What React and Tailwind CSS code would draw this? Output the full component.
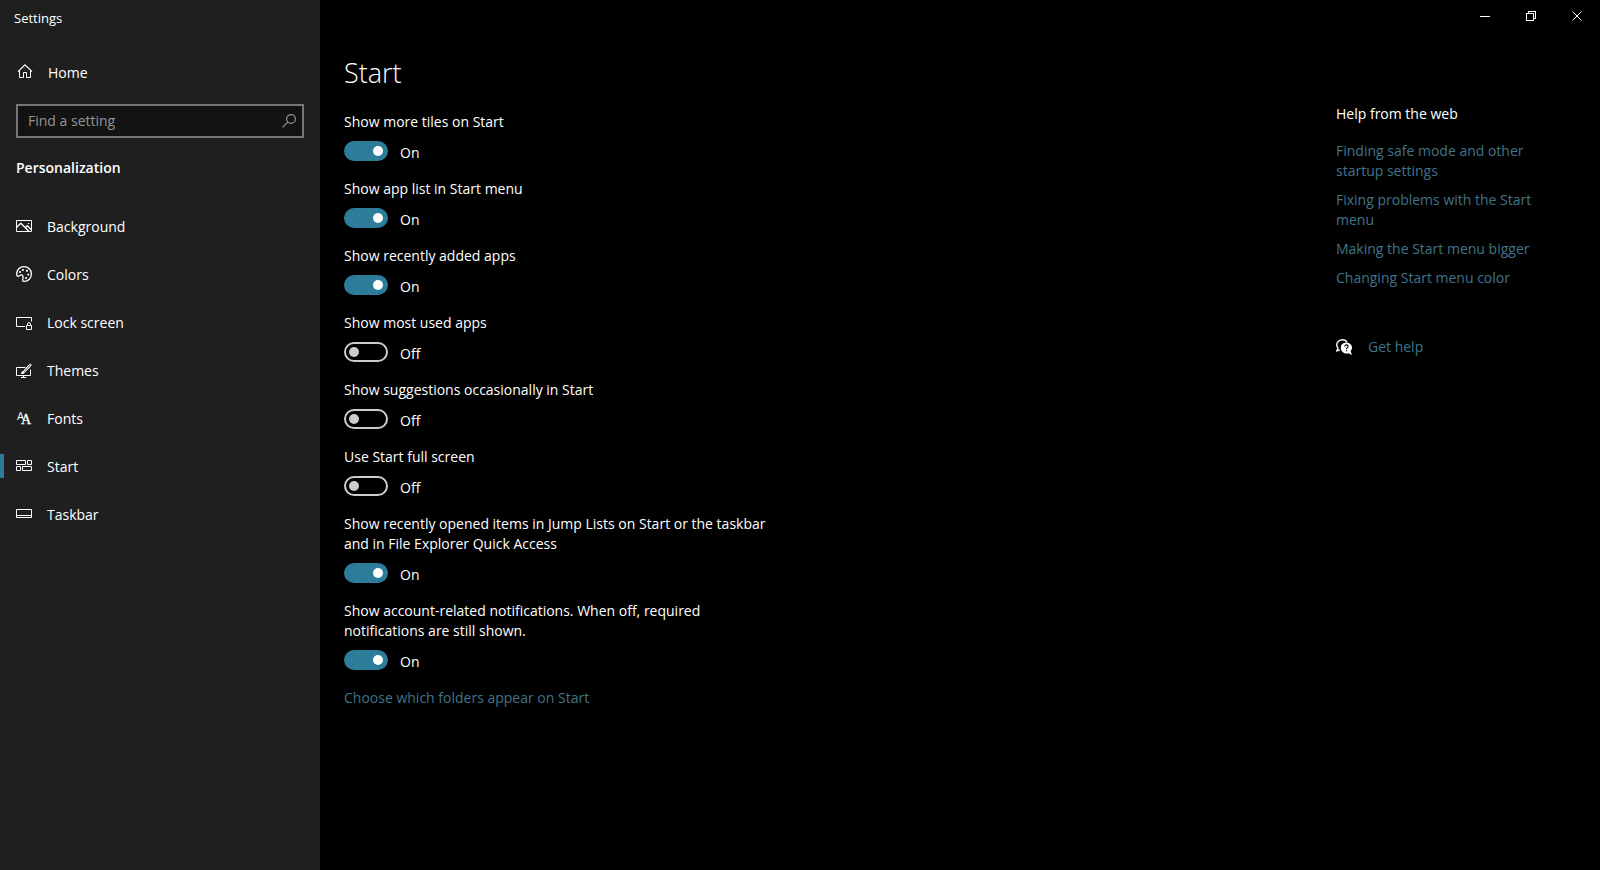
import React, { useState } from 'react';

const navItems = [
  { label: 'Background', icon: <BackgroundIcon /> },
  { label: 'Colors', icon: <ColorsIcon /> },
  { label: 'Lock screen', icon: <LockScreenIcon /> },
  { label: 'Themes', icon: <ThemesIcon /> },
  { label: 'Fonts', icon: <FontsIcon /> },
  { label: 'Start', icon: <StartIcon />, active: true },
  { label: 'Taskbar', icon: <TaskbarIcon /> },
];

const settings = [
  { id: 'more-tiles', label: 'Show more tiles on Start', on: true },
  { id: 'app-list', label: 'Show app list in Start menu', on: true },
  { id: 'recently-added', label: 'Show recently added apps', on: true },
  { id: 'most-used', label: 'Show most used apps', on: false },
  { id: 'suggestions', label: 'Show suggestions occasionally in Start', on: false },
  { id: 'full-screen', label: 'Use Start full screen', on: false },
  {
    id: 'jump-lists',
    label: 'Show recently opened items in Jump Lists on Start or the taskbar and in File Explorer Quick Access',
    on: true,
  },
  {
    id: 'account',
    label: 'Show account-related notifications. When off, required notifications are still shown.',
    on: true,
  },
];

const helpLinks = [
  'Finding safe mode and other startup settings',
  'Fixing problems with the Start menu',
  'Making the Start menu bigger',
  'Changing Start menu color',
];

export default function App() {
  return (
    <div className="flex min-h-screen bg-black font-['Open_Sans','Noto_Sans',sans-serif] text-sm leading-5 text-white">
      {/* Sidebar */}
      <aside className="flex w-80 shrink-0 flex-col bg-[#1f1f1f]">
        <div className="flex h-9 items-center px-3.5 text-[13px]">Settings</div>

        <a href="#" className="mt-3 flex h-12 items-center gap-[15px] pl-[17px]">
          <HomeIcon />
          <span className="pt-0.5">Home</span>
        </a>

        <div className="mx-4 mt-2 flex h-[34px] items-center border-2 border-[#767676] bg-[#131313] pl-[10px] pr-1.5">
          <input
            type="text"
            aria-label="Find a setting"
            placeholder="Find a setting"
            className="min-w-0 flex-1 bg-transparent outline-none placeholder:text-[#949494]"
          />
          <button type="button" aria-label="Search">
            <SearchIcon />
          </button>
        </div>

        <h2 className="mt-5 px-4 font-semibold">Personalization</h2>

        <nav className="mt-6">
          {navItems.map((item) => (
            <NavItem key={item.label} {...item} />
          ))}
        </nav>
      </aside>

      {/* Main content */}
      <div className="flex min-w-0 flex-1 flex-col">
        <header className="flex h-8 justify-end">
          <WindowButton label="Minimize">
            <path d="M0 5.5h10" />
          </WindowButton>
          <WindowButton label="Restore">
            <path d="M0.5 2.5h7v7h-7zM2.5 2.5v-2h7v7h-2" />
          </WindowButton>
          <WindowButton label="Close" smooth>
            <path d="M0.5 0.5l9 9M9.5 0.5l-9 9" />
          </WindowButton>
        </header>

        <div className="flex flex-1 justify-between pl-6">
          <main className="w-[440px] pt-[23px]">
            <h1 className="text-[27px] font-light leading-9">Start</h1>
            <div className="mt-[21px] space-y-[18px]">
              {settings.map((setting) => (
                <Toggle key={setting.id} {...setting} />
              ))}
              <a href="#" className="block text-[#417488]">
                Choose which folders appear on Start
              </a>
            </div>
          </main>

          <aside className="w-[264px] pr-14 pt-[72px]">
            <h2>Help from the web</h2>
            <ul className="mt-[17px] space-y-[9px] text-[#417488]">
              {helpLinks.map((link) => (
                <li key={link}>
                  <a href="#">{link}</a>
                </li>
              ))}
            </ul>
            <a href="#" className="mt-[49px] flex items-center gap-4 text-[#417488]">
              <HelpIcon />
              Get help
            </a>
          </aside>
        </div>
      </div>
    </div>
  );
}

function NavItem({ icon, label, active }) {
  return (
    <a href="#" className={`flex h-12 items-center ${active ? '' : 'hover:bg-[#2b2b2b]'}`}>
      <span className={`h-6 w-1 ${active ? 'bg-[#2d7d9a]' : ''}`} />
      <span className="ml-3 mr-[15px]">{icon}</span>
      <span className="pt-0.5">{label}</span>
    </a>
  );
}

function Toggle({ id, label, on }) {
  const [checked, setChecked] = useState(on);

  return (
    <div>
      <label htmlFor={id} className="block">
        {label}
      </label>
      <div className="mt-[9px] flex h-5 items-center gap-3">
        <input
          id={id}
          type="checkbox"
          role="switch"
          checked={checked}
          onChange={(e) => setChecked(e.target.checked)}
          className="flex h-5 w-11 appearance-none items-center rounded-full border-2 border-[#cccccc] px-[3px] before:h-2.5 before:w-2.5 before:rounded-full before:bg-[#cccccc] checked:justify-end checked:border-[#2d7d9a] checked:bg-[#2d7d9a] checked:before:bg-white"
        />
        <span className="pt-1">{checked ? 'On' : 'Off'}</span>
      </div>
    </div>
  );
}

function WindowButton({ label, smooth, children }) {
  return (
    <button type="button" aria-label={label} className="flex w-[46px] items-center justify-center hover:bg-[#2b2b2b]">
      <svg
        width="10"
        height="10"
        viewBox="0 0 10 10"
        fill="none"
        stroke="currentColor"
        shapeRendering={smooth ? 'auto' : 'crispEdges'}
      >
        {children}
      </svg>
    </button>
  );
}

function Icon({ children }) {
  return (
    <svg
      className="block shrink-0 overflow-visible"
      width="16"
      height="16"
      viewBox="0 0 16 16"
      fill="none"
      stroke="currentColor"
    >
      {children}
    </svg>
  );
}

function HomeIcon() {
  return (
    <Icon>
      <path d="M1 7.6L8 0.9l7 6.7" strokeWidth="1.2" />
      <path d="M2.5 6.5v7h4v-5h3v5h4v-7" />
    </Icon>
  );
}

function SearchIcon() {
  return (
    <svg className="block" width="14" height="14" viewBox="0 0 14 14" fill="none" stroke="#949494">
      <circle cx="9" cy="5" r="4.4" strokeWidth="1.2" />
      <path d="M5.8 8.2L0.6 13.4" strokeWidth="1.2" />
    </svg>
  );
}

function BackgroundIcon() {
  return (
    <Icon>
      <path d="M0.5 2.5h15v11h-15z" />
      <path d="M0.5 9.5l4.3-4.3 8.3 8.3M9.5 9.5l1.8-1.8 4.2 4.2" strokeWidth="1.3" />
      <path d="M12 5.5h1.2" strokeWidth="1.2" />
    </Icon>
  );
}

function ColorsIcon() {
  return (
    <Icon>
      <path
        d="M8 0.6c4.2 0 7.4 3.2 7.4 7.3 0 4.3-3.2 7.5-7 7.5-1.5 0-2-0.9-1.6-2.2 0.5-1.6 0.5-3.1-0.4-3.9-0.9-0.8-1.9-0.3-2.9 0.4-1.5 1-2.9 0.6-2.9-1.5C0.6 4 3.8 0.6 8 0.6z"
        strokeWidth="1.3"
      />
      <g fill="currentColor" stroke="none">
        <circle cx="4" cy="6" r="1.1" />
        <circle cx="7" cy="4" r="1.1" />
        <circle cx="11" cy="4.8" r="1.1" />
        <circle cx="12.3" cy="8.6" r="1.1" />
        <circle cx="10" cy="12" r="1.1" />
      </g>
    </Icon>
  );
}

function LockScreenIcon() {
  return (
    <Icon>
      <path d="M9 12.5H0.5v-9h15v4" />
      <path d="M10.5 11.5h5v4h-5zM11.5 11.5v-1.4a1.5 1.5 0 0 1 3 0v1.4" />
    </Icon>
  );
}

function ThemesIcon() {
  return (
    <Icon>
      <path d="M9.5 5.5h-9v8h14v-6M7.500 13.500v2M5 15.500h5" />
      <path
        d="M14.900 2.400c-0.700-0.500-1.400 0-2.100 0.700L8.200 8.200l1.300 1.300 4.800-5c0.700-0.800 1.100-1.500 0.600-2.100z"
        fill="currentColor"
        fillOpacity="0.5"
      />
      <path
        d="M4.400 11.700c1.500-0.200 1-2.500 2.600-2.900 1.200-0.300 2.200 0.800 1.700 1.900-0.600 1.400-2.700 1.800-4.300 1z"
        fill="currentColor"
        stroke="none"
      />
    </Icon>
  );
}

function FontsIcon() {
  return (
    <Icon>
      <g fill="currentColor" stroke="none">
        <text x="1" y="10" fontSize="11" fontFamily="Open Sans">
          A
        </text>
        <text x="5" y="14" fontSize="14" fontFamily="Liberation Serif" stroke="currentColor" strokeWidth="0.3">
          A
        </text>
      </g>
    </Icon>
  );
}

function StartIcon() {
  return (
    <Icon>
      <path d="M0.5 2.5h9v4h-9zM11.5 2.5h4v4h-4zM0.5 8.5h4v4h-4zM6.5 8.5h9v4h-9z" />
    </Icon>
  );
}

function TaskbarIcon() {
  return (
    <Icon>
      <path d="M0.5 3.5h15v8h-15zM0.5 9.5h15" />
    </Icon>
  );
}

function HelpIcon() {
  return (
    <svg
      className="block shrink-0 text-white"
      width="16"
      height="16"
      viewBox="0 0 16 16"
      fill="none"
      stroke="currentColor"
    >
      <path
        d="M11 3.2C10 1.5 8.3 0.7 6.4 0.7 3.2 0.7 0.7 3 0.7 5.8c0 1.3 0.5 2.4 1.3 3.3L0.800 11.900l3-0.900"
        strokeWidth="1.4"
      />
      <path
        d="M10.400 3.400c3.200 0 5.600 2.300 5.600 5.200 0 1.400-0.500 2.500-1.400 3.500L16 16l-3.700-1.700c-0.600 0.200-1.200 0.200-1.900 0.200-3.200 0-5.600-2.600-5.600-5.800s2.400-5.300 5.600-5.300z"
        fill="currentColor"
        stroke="none"
      />
      <path
        d="M8.800 7.500c0-1 0.700-1.600 1.600-1.600 1 0 1.700 0.600 1.700 1.500 0 1.200-1.600 1.300-1.600 2.700M10.500 11v1.200"
        stroke="black"
        strokeWidth="1.1"
      />
    </svg>
  );
}
